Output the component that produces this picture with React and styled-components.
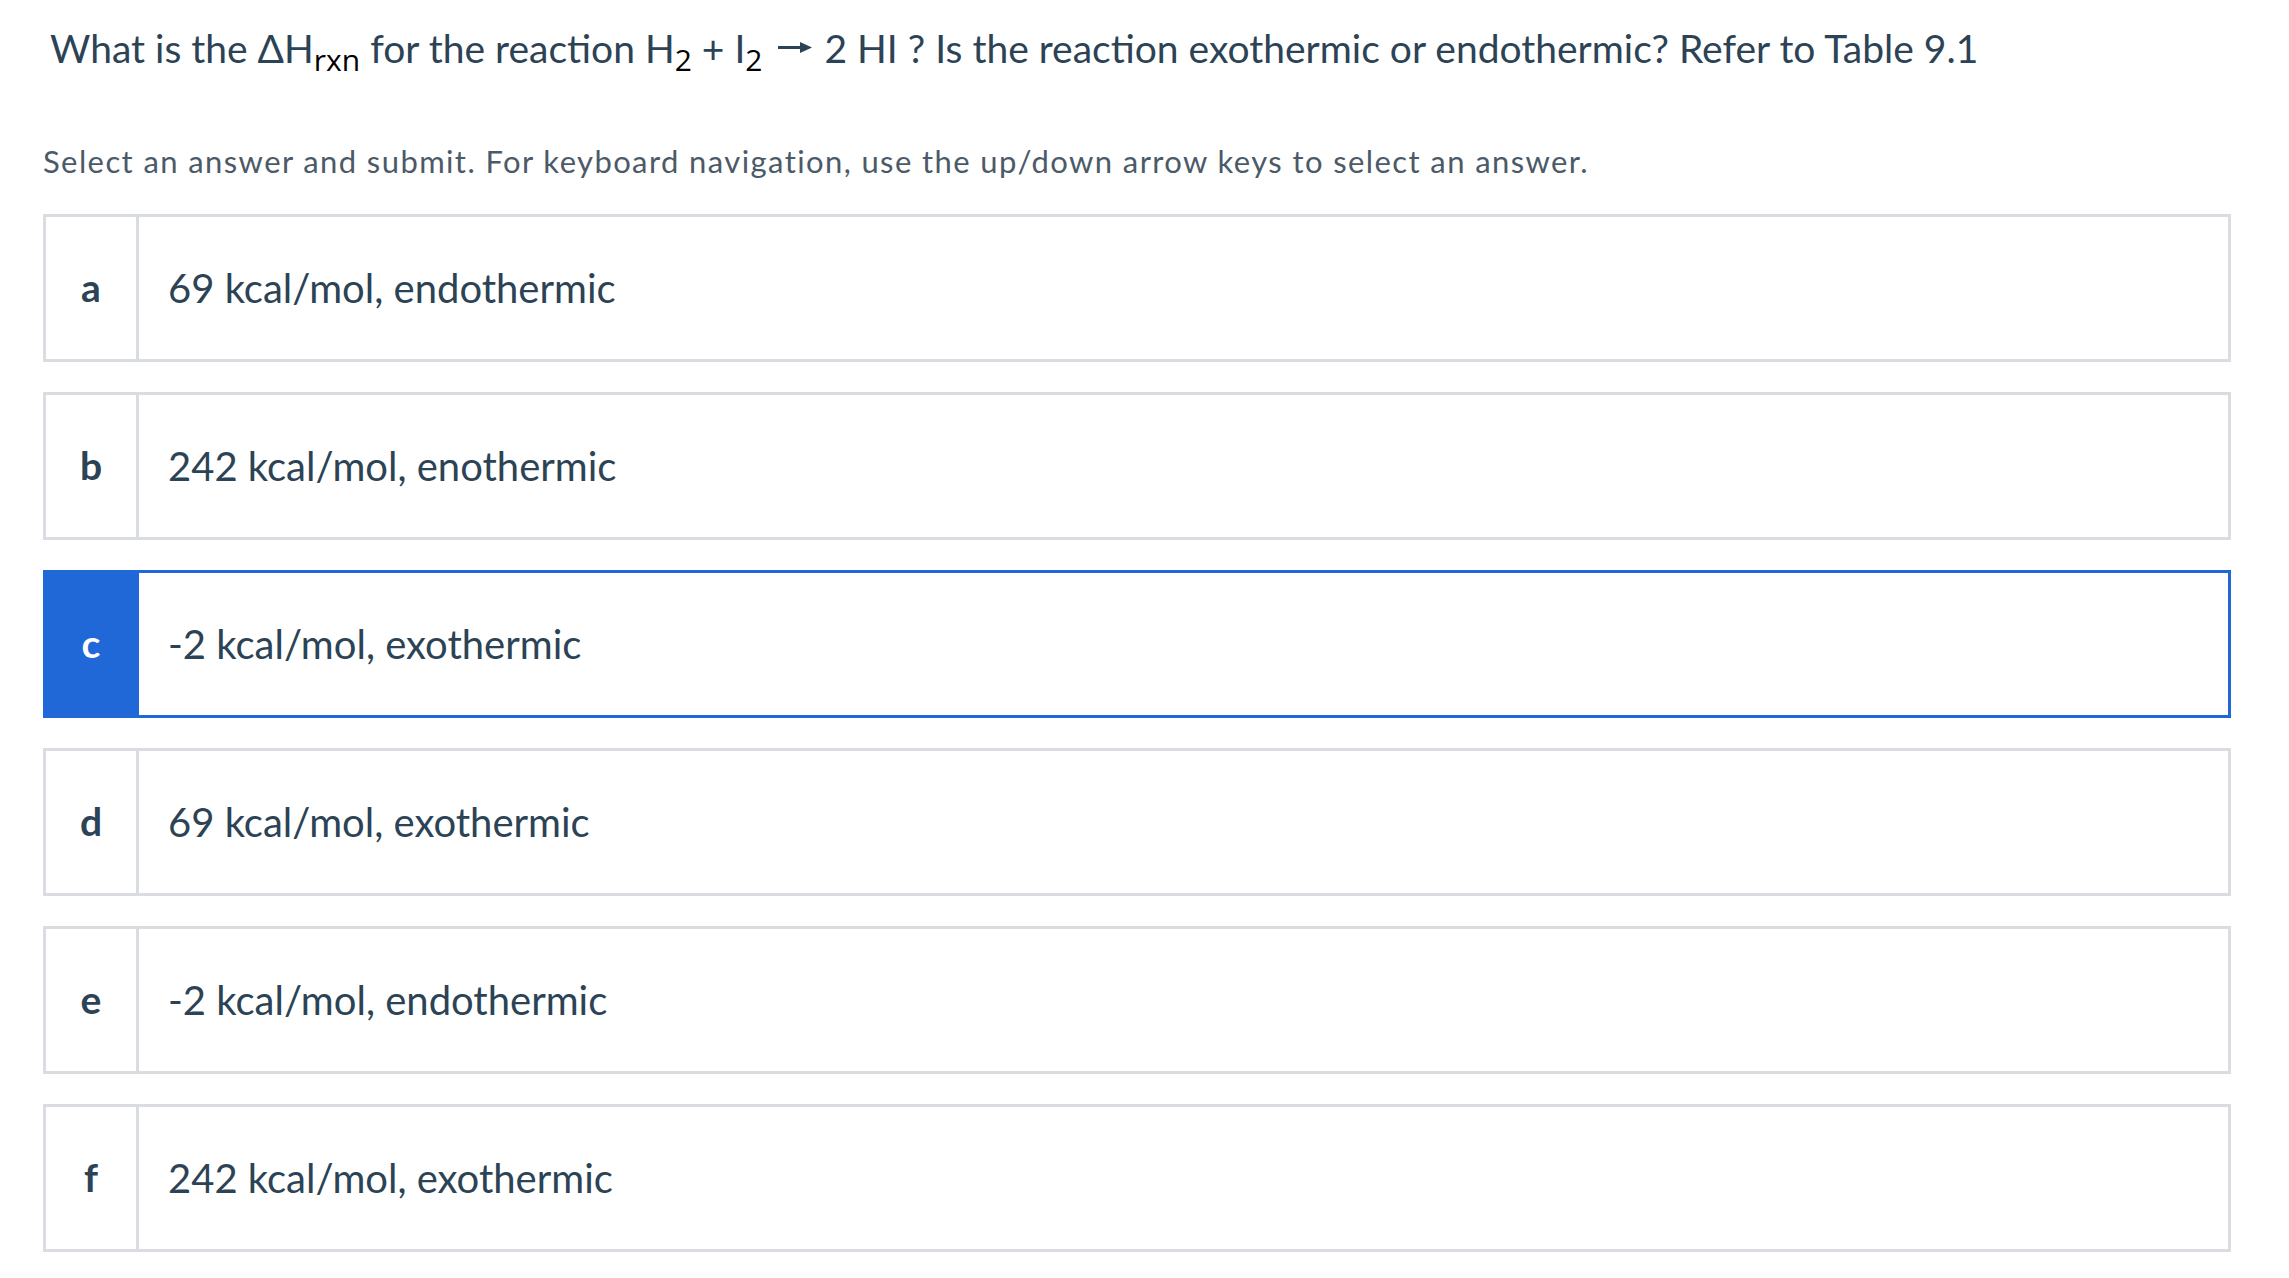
import React from "react";
import styled, { createGlobalStyle } from "styled-components";

const GlobalStyle = createGlobalStyle`
  html, body {
    margin: 0;
    padding: 0;
    background: #ffffff;
  }
  body {
    font-family: Lato, "Noto Sans", "Liberation Sans", sans-serif;
    color: #2c4356;
  }
`;

const Page = styled.main`
  display: flex;
  flex-direction: column;
  width: 2188px;
  padding: 24px 0 40px 43px;
`;

const Question = styled.h1`
  margin: 0 0 0 7px;
  font-size: 39px;
  line-height: 48px;
  font-weight: 400;
  color: #2c4356;
  white-space: nowrap;
`;

const Sub = styled.sub`
  font-family: "Open Sans", Lato, sans-serif;
  font-size: 30px;
  line-height: 0;
  vertical-align: -8px;
  color: #000000;
`;

const Arrow = styled.svg`
  display: inline-block;
  width: 34px;
  height: 11px;
  margin: 0 2px 0 6px;
  vertical-align: 10px;
`;

const Instruction = styled.p`
  margin: 72px 0 0 0;
  font-size: 31px;
  line-height: 35px;
  letter-spacing: 1.4px;
  color: #4c5a67;
`;

const Options = styled.div`
  display: flex;
  flex-direction: column;
  gap: 30px;
  margin-top: 35px;
`;

const Option = styled.div`
  display: flex;
  align-items: stretch;
  height: 148px;
  box-sizing: border-box;
  border: 3px solid ${(p) => (p.$selected ? "#2067d8" : "#d9dde2")};
  background: #ffffff;
`;

const Letter = styled.div`
  display: flex;
  align-items: center;
  justify-content: center;
  flex: 0 0 90px;
  border-right: 3px solid ${(p) => (p.$selected ? "#2067d8" : "#d9dde2")};
  background: ${(p) => (p.$selected ? "#2067d8" : "#ffffff")};
  color: ${(p) => (p.$selected ? "#ffffff" : "#2c4356")};
  font-size: 39px;
  font-weight: 700;
  padding-bottom: 2px;
`;

const AnswerText = styled.div`
  display: flex;
  align-items: center;
  padding-left: 29px;
  font-size: 40px;
  color: #2c4356;
`;

const answers = [
  { key: "a", text: "69 kcal/mol, endothermic" },
  { key: "b", text: "242 kcal/mol, enothermic" },
  { key: "c", text: "-2 kcal/mol, exothermic", selected: true },
  { key: "d", text: "69 kcal/mol, exothermic" },
  { key: "e", text: "-2 kcal/mol, endothermic" },
  { key: "f", text: "242 kcal/mol, exothermic" },
];

export default function App() {
  return (
    <>
      <GlobalStyle />
      <Page>
        <Question>
          What is the ΔH<Sub>rxn</Sub> for the reaction H<Sub>2</Sub> + I<Sub>2</Sub>{" "}
          <Arrow viewBox="0 0 34 11" aria-hidden="true">
            <rect x="0" y="4" width="25" height="3" fill="#2c4356" />
            <polygon points="22,0 34,5.5 22,11" fill="#2c4356" />
          </Arrow>{" "}
          2 HI ? Is the reaction exothermic or endothermic? Refer to Table 9.1
        </Question>
        <Instruction>
          Select an answer and submit. For keyboard navigation, use the up/down arrow keys to select an answer.
        </Instruction>
        <Options role="radiogroup">
          {answers.map((a) => (
            <Option key={a.key} $selected={a.selected} role="radio" aria-checked={!!a.selected}>
              <Letter $selected={a.selected}>{a.key}</Letter>
              <AnswerText>{a.text}</AnswerText>
            </Option>
          ))}
        </Options>
      </Page>
    </>
  );
}
